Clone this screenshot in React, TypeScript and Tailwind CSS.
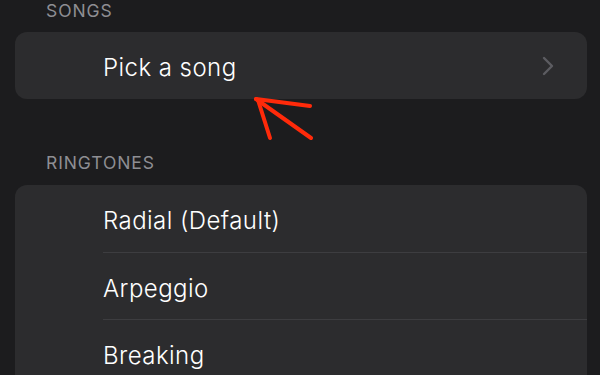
export default function App() {
  const font = { fontFamily: "Inter, 'Liberation Sans', sans-serif" };
  const ringtones = ["Radial (Default)", "Arpeggio", "Breaking"];

  return (
    <div className="relative h-[375px] w-[600px] overflow-hidden bg-[#1c1c1e]" style={font}>
      <div className="pl-[15px] pr-[13px]">
        <div className="mt-[-1px] pl-[31px] text-[17.5px] leading-[24px] tracking-[0.9px] text-[#8e8e93]">SONGS</div>
        <div className="mt-[9px] flex h-[67px] items-center rounded-[12px] bg-[#2c2c2e] pl-[88px] pr-[32px]">
          <span className="flex-1 pt-[5px] text-[24px] font-[350] tracking-[0.45px] text-white">Pick a song</span>
          <svg width="14" height="20" viewBox="0 0 14 20" fill="none">
            <path d="M3 2l8 8-8 8" stroke="#5c5c61" strokeWidth="2.4" strokeLinecap="round" strokeLinejoin="round" />
          </svg>
        </div>

        <div className="mt-[52px] pl-[31px] text-[17.5px] leading-[24px] tracking-[0.9px] text-[#8e8e93]">RINGTONES</div>
        <div className="mt-[10px] rounded-t-[12px] bg-[#2c2c2e]">
          {ringtones.map((name, i) => (
            <div key={name} className="flex h-[67px] flex-col pl-[88px]">
              {i > 0 && <div className="h-px bg-[#3d3d40]" />}
              <div className="flex flex-1 items-center pt-[5px] text-[24px] font-[350] tracking-[0.45px] text-white">{name}</div>
            </div>
          ))}
        </div>
      </div>

      <svg className="absolute left-0 top-0" width="600" height="375" viewBox="0 0 600 375" fill="none">
        <g stroke="#ff2a0a" strokeWidth="4" strokeLinecap="round">
          <path d="M256 99L310 106" />
          <path d="M256 99L311 138" />
          <path d="M258 100L270 138" />
        </g>
      </svg>
    </div>
  );
}
